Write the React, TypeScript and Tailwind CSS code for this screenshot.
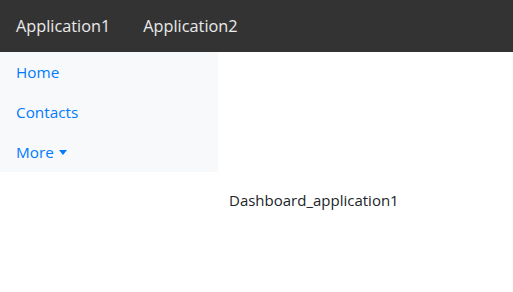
const font = { fontFamily: '"Segoe UI", "Open Sans", "Liberation Sans", sans-serif' };

const SIDE_LINKS = ['Home', 'Contacts'];

export default function App() {
  return (
    <div className="min-h-screen bg-white text-[15px] leading-6 text-[#212529]" style={font}>
      <header className="flex h-[52px] items-center bg-[#333333] px-4">
        <a className="text-[16.3px] text-white/90">Application1</a>
        <a className="ml-[33px] text-[16.3px] text-white/90">Application2</a>
      </header>
      <div className="flex">
        <nav className="flex h-[120px] w-[218px] flex-col bg-[#f8f9fa]">
          {SIDE_LINKS.map((label) => (
            <a key={label} className="px-4 py-2 text-[15.3px] text-[#007bff]">
              {label}
            </a>
          ))}
          <a className="flex items-center px-4 py-2 text-[15.3px] text-[#007bff]">
            More
            <span className="ml-[5px] mt-[1px] h-0 w-0 border-x-[4px] border-t-[5px] border-x-transparent border-t-[#007bff]" />
          </a>
        </nav>
        <main className="pl-[11px] pt-[136px]">Dashboard_application1</main>
      </div>
    </div>
  );
}
